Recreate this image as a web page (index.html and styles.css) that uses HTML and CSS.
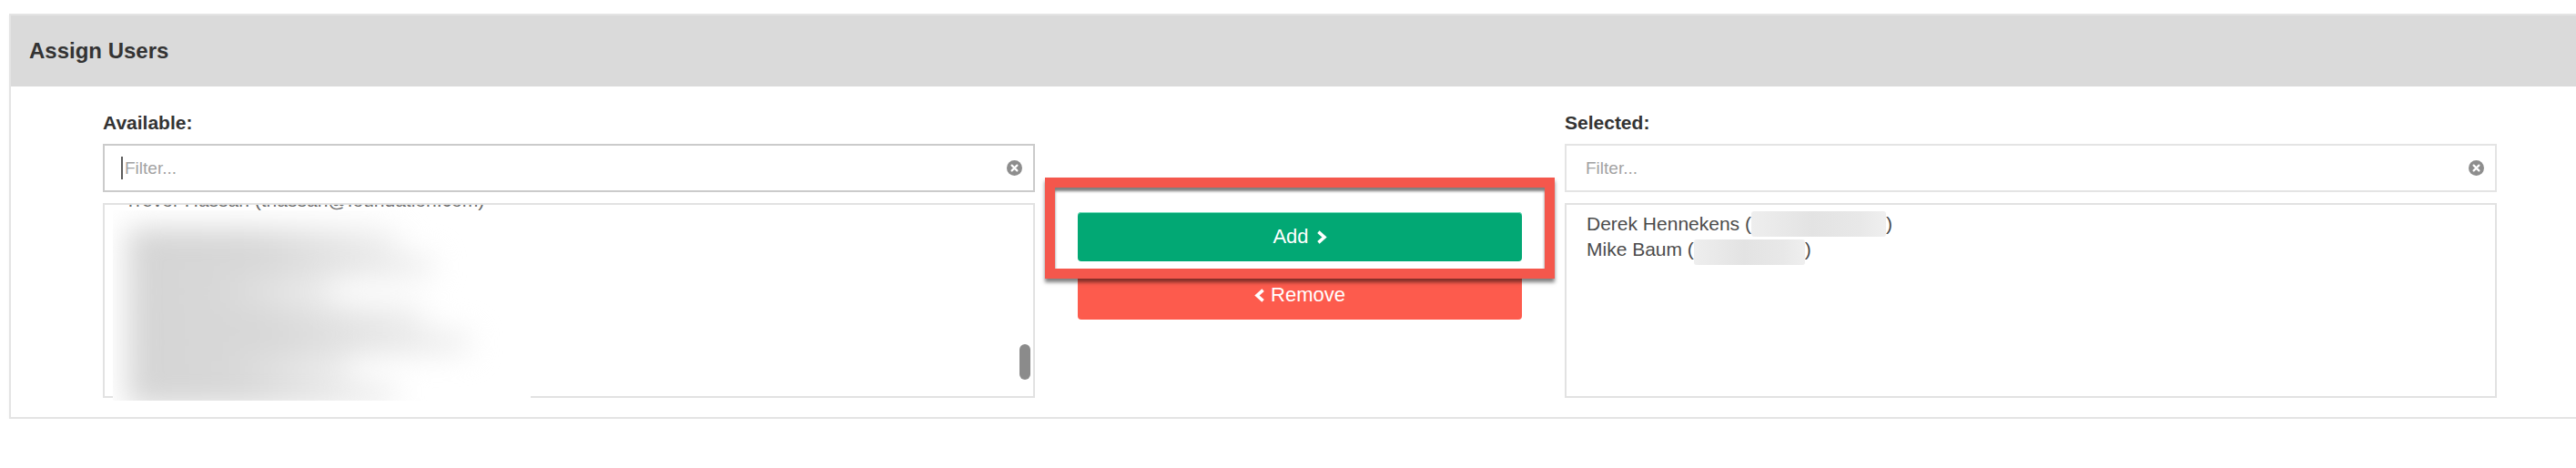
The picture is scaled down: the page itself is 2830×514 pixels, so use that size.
FILE: index.html
```html
<!DOCTYPE html>
<html lang="en">
<head>
<meta charset="utf-8">
<title>Assign Users</title>
<link rel="stylesheet" href="styles.css">
</head>
<body>
<div class="panel">
  <div class="panel-header"><h2>Assign Users</h2></div>
  <div class="panel-body">
    <div class="dual">
      <div class="col">
        <label class="col-label">Available:</label>
        <div class="filter focused">
          <span class="caret"></span>
          <input type="text" placeholder="Filter...">
          <svg class="clear" width="17" height="17" viewBox="0 0 17 17"><circle cx="8.5" cy="8.5" r="8.5" fill="#8e8e8e"/><path d="M5.6 5.6 L11.4 11.4 M11.4 5.6 L5.6 11.4" stroke="#fff" stroke-width="2.2" stroke-linecap="round"/></svg>
        </div>
        <div class="listbox">
          <div class="items-clip">
            <ul class="items scrolled">
              <li>Trevor Hassan (thassan@foundation.com)</li>
            </ul>
          </div>
          <div class="redact">
            <div class="smudges">
              <div class="smudge w1"></div>
              <div class="smudge w2"></div>
              <div class="smudge w3"></div>
              <div class="smudge w4"></div>
              <div class="smudge w5"></div>
              <div class="smudge w6"></div>
              <div class="smudge w7"></div>
            </div>
          </div>
          <div class="thumb"></div>
        </div>
      </div>

      <div class="mid">
        <button class="btn add">Add<svg class="chev chev-r" width="12" height="15" viewBox="0 0 12 15"><path d="M2.4 1.6 L9 7.5 L2.4 13.4" fill="none" stroke="#fff" stroke-width="3.6"/></svg></button>
        <button class="btn remove"><svg class="chev chev-l" width="12" height="15" viewBox="0 0 12 15"><path d="M9.6 1.6 L3 7.5 L9.6 13.4" fill="none" stroke="#fff" stroke-width="3.6"/></svg>Remove</button>
        <div class="annot"></div>
      </div>

      <div class="col">
        <label class="col-label">Selected:</label>
        <div class="filter">
          <input type="text" placeholder="Filter...">
          <svg class="clear" width="17" height="17" viewBox="0 0 17 17"><circle cx="8.5" cy="8.5" r="8.5" fill="#8e8e8e"/><path d="M5.6 5.6 L11.4 11.4 M11.4 5.6 L5.6 11.4" stroke="#fff" stroke-width="2.2" stroke-linecap="round"/></svg>
        </div>
        <div class="listbox">
          <div class="items-clip">
            <ul class="items">
              <li>Derek Hennekens (<span class="blurbox b1"></span>)</li>
              <li>Mike Baum (<span class="blurbox b2"></span>)</li>
            </ul>
          </div>
        </div>
      </div>
    </div>
  </div>
</div>
</body>
</html>
```
FILE: styles.css
```css
html, body {
  margin: 0;
  padding: 0;
  background: #ffffff;
}
body {
  font-family: "Liberation Sans", Arial, Helvetica, sans-serif;
  color: #333333;
  overflow: hidden;
}

.panel {
  margin: 15px 0 0 10px;
  border: 2px solid #e4e4e4;
  border-right: none;
  background: #ffffff;
  box-shadow: 0 2px 3px rgba(0, 0, 0, 0.04);
}

.panel-header {
  height: 78px;
  background: #dadada;
  display: flex;
  align-items: center;
  padding-left: 20px;
}
.panel-header h2 {
  margin: 0;
  font-size: 24px;
  font-weight: bold;
  color: #333333;
}

.panel-body {
  padding: 28px 0 21px 101px;
}

.dual {
  display: grid;
  grid-template-columns: 1024px 488px 1024px;
  column-gap: 47px;
  align-items: start;
}

.col-label {
  display: block;
  font-size: 21px;
  line-height: 24px;
  font-weight: bold;
  color: #333333;
}

.filter {
  margin-top: 11px;
  height: 53px;
  box-sizing: border-box;
  border: 2px solid #e4e4e4;
  background: #ffffff;
  display: flex;
  align-items: center;
  padding: 0 12px 0 19px;
}
.filter.focused {
  border-color: #cbcbcb;
  padding-left: 18px;
}
.caret {
  width: 2px;
  height: 25px;
  background: #5c5c5c;
  flex: none;
}
.filter input {
  flex: 1;
  min-width: 0;
  border: none;
  outline: none;
  background: transparent;
  padding: 0 0 0 2px;
  font-family: "Liberation Sans", Arial, sans-serif;
  font-size: 19px;
  color: #333333;
}
.filter input::placeholder {
  color: #a2a2a2;
}
.clear {
  flex: none;
  display: block;
}

.listbox {
  margin-top: 12px;
  height: 214px;
  box-sizing: border-box;
  border: 2px solid #e2e2e2;
  background: #ffffff;
  position: relative;
}
.items-clip {
  height: 100%;
  overflow: hidden;
}
.items {
  list-style: none;
  margin: 0;
  padding: 7px 0 0 22px;
  font-size: 21px;
  line-height: 28px;
  color: #4b4b4b;
  white-space: nowrap;
}
.items.scrolled {
  margin-top: -26px;
  color: #6a6a6a;
}

.blurbox {
  display: inline-block;
  vertical-align: top;
  height: 28px;
  border-radius: 3px;
  background: linear-gradient(90deg, #eeeeee, #e3e3e3 45%, #e8e8e8 80%, #efefef);
  filter: blur(0.6px);
}
.b1 { width: 148px; }
.b2 { width: 122px; margin-top: 3px; }

.redact {
  position: absolute;
  left: 9px;
  top: 6px;
  width: 459px;
  height: 209px;
  background: #ffffff;
  overflow: hidden;
}
.smudges {
  padding: 22px 0 0 14px;
  filter: blur(16px);
  display: flex;
  flex-direction: column;
  gap: 6px;
}
.smudge {
  height: 22px;
  border-radius: 11px;
  background: linear-gradient(90deg, #c9c9c9 0%, #cdcdcd 45%, #e2e2e2 80%, #eeeeee 100%);
}
.w1 { width: 300px; }
.w2 { width: 340px; }
.w3 { width: 230px; }
.w4 { width: 330px; }
.w5 { width: 380px; }
.w6 { width: 250px; }
.w7 { width: 300px; }

.thumb {
  position: absolute;
  right: 3px;
  top: 153px;
  width: 12px;
  height: 39px;
  border-radius: 6px;
  background: #8b8b8b;
}

.mid {
  position: relative;
  padding-top: 110px;
  display: flex;
  flex-direction: column;
  gap: 10px;
}
.btn {
  height: 54px;
  width: 100%;
  border: none;
  border-radius: 4px;
  color: #ffffff;
  font-family: "Liberation Sans", Arial, sans-serif;
  font-size: 22px;
  display: flex;
  align-items: center;
  justify-content: center;
  padding: 0;
}
.add {
  background: #02a874;
  box-shadow: inset 0 1px 0 #6fdcb8;
}
.remove {
  background: #fd5b4d;
}
.chev {
  display: block;
  flex: none;
}
.chev-r { margin-left: 8px; }
.chev-l { margin-right: 6px; }

.annot {
  position: absolute;
  left: -36px;
  top: 72px;
  width: 560px;
  height: 111px;
  box-sizing: border-box;
  border: 11px solid #f4574c;
  box-shadow: 0 4px 4px rgba(0, 0, 0, 0.5), inset 0 4px 3px rgba(0, 0, 0, 0.5);
  pointer-events: none;
  z-index: 2;
}
```
